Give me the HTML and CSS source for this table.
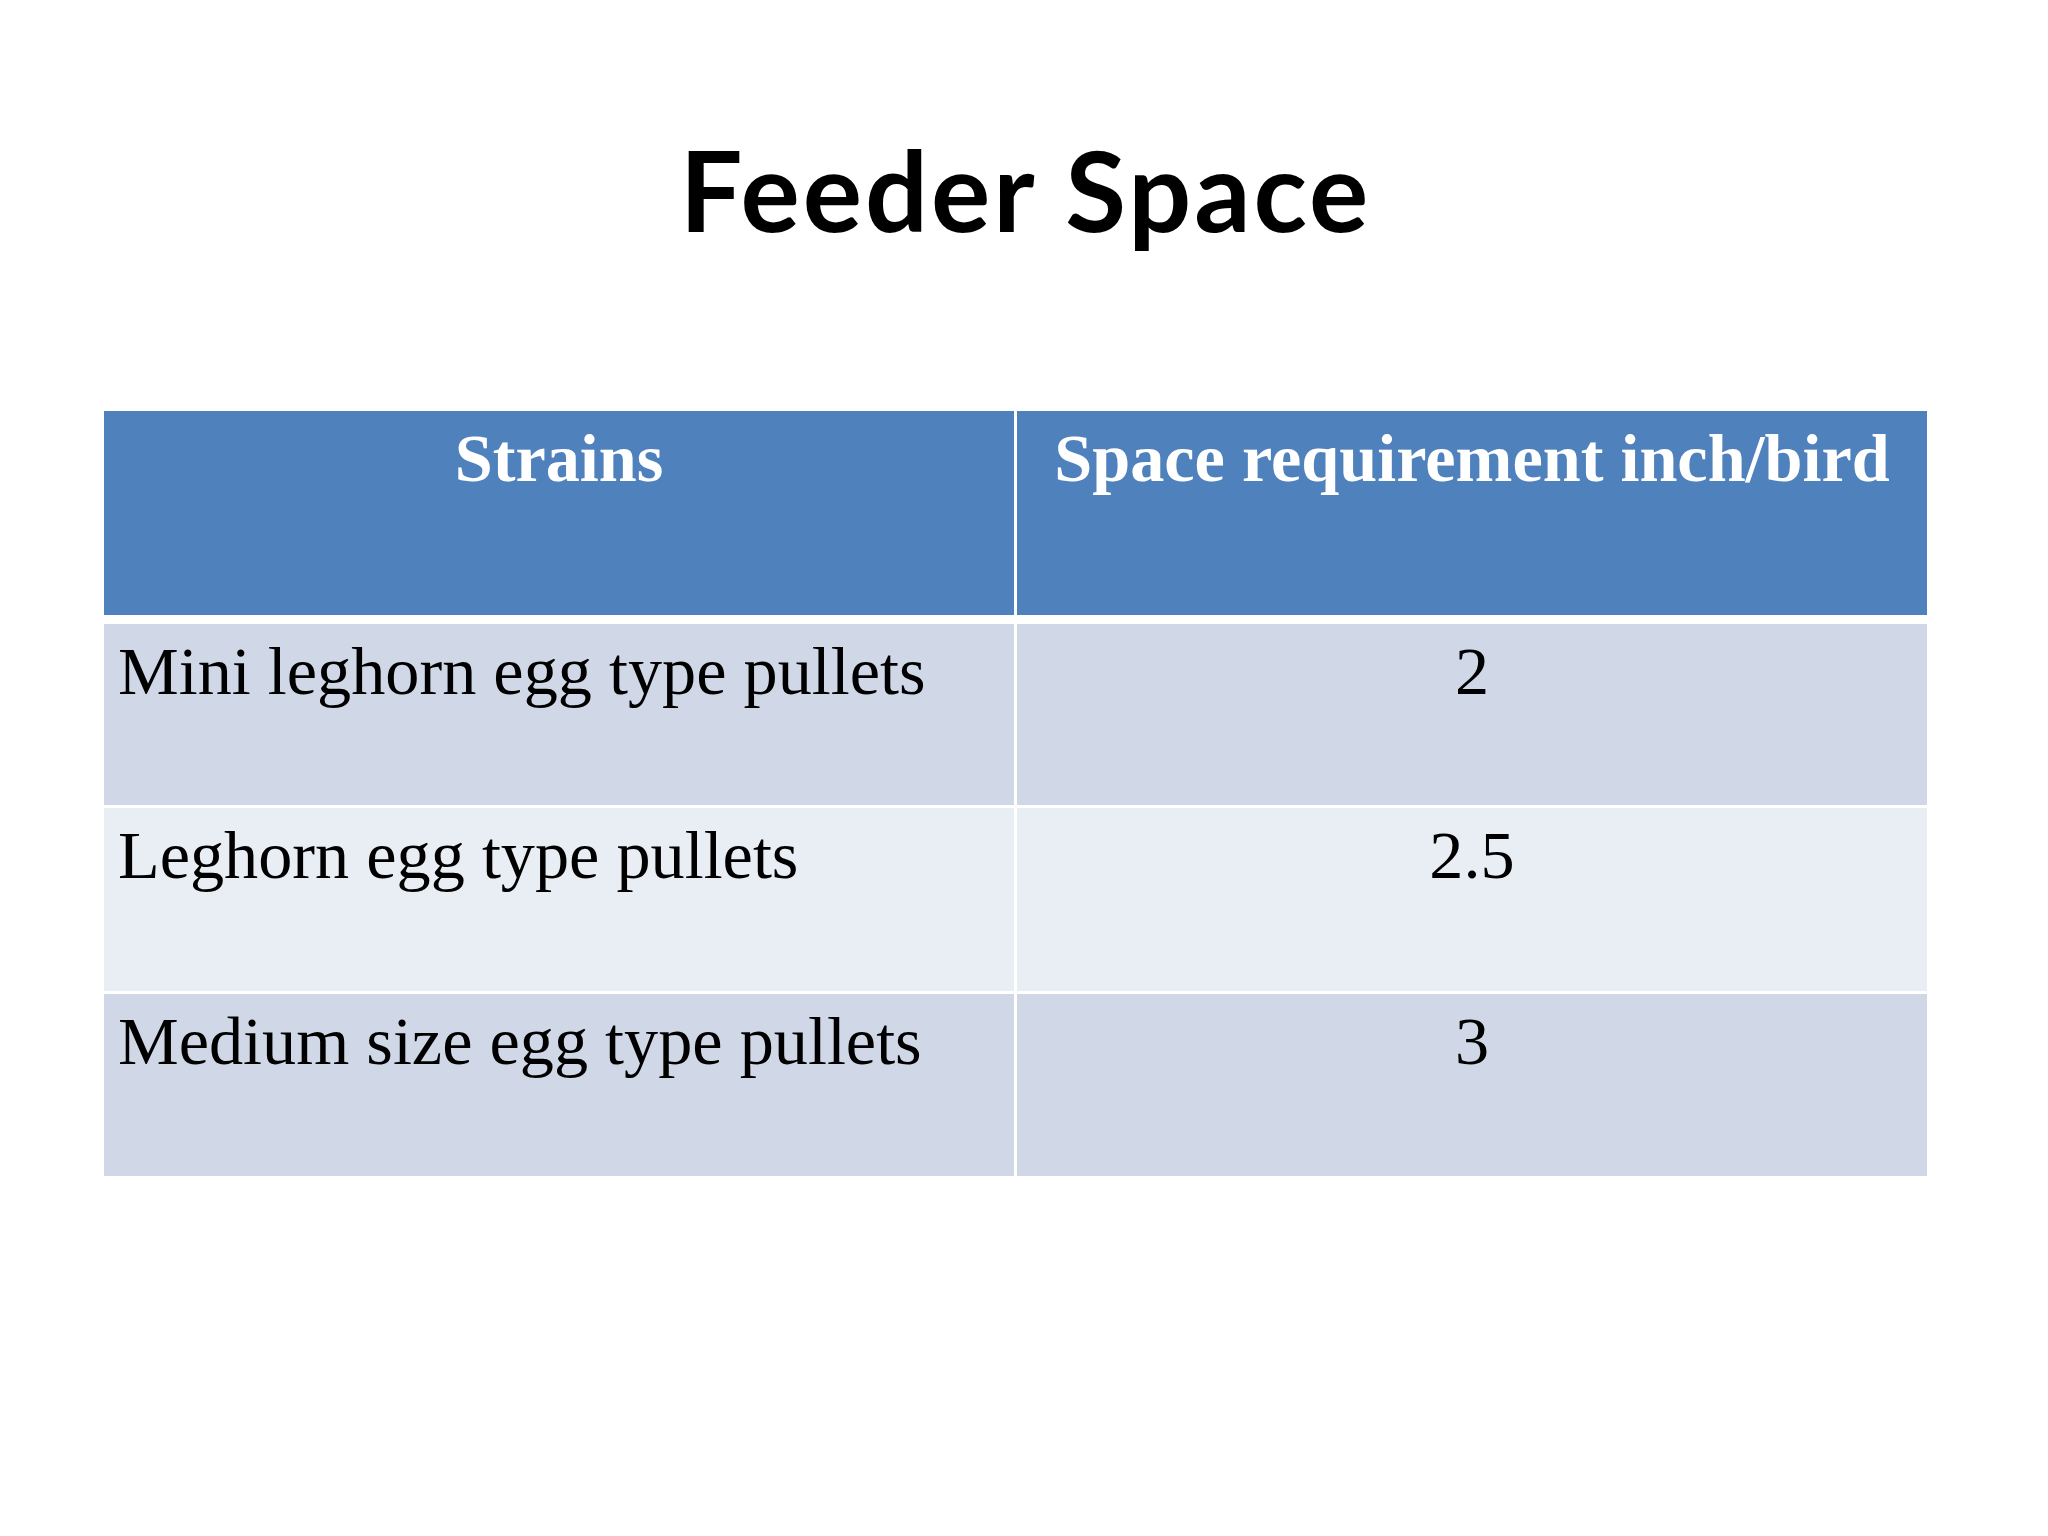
FILE: index.html
```html
<!DOCTYPE html>
<html lang="en">
<head>
<meta charset="utf-8">
<title>Feeder Space</title>
<link rel="stylesheet" href="styles.css">
</head>
<body>
<div class="slide">
  <h1 class="title">Feeder Space</h1>
  <div class="table">
    <div class="cell head left">Strains</div>
    <div class="cell head center">Space requirement inch/bird</div>
    <div class="cell band1 left">Mini leghorn egg type pullets</div>
    <div class="cell band1 center">2</div>
    <div class="cell band2 left">Leghorn egg type pullets</div>
    <div class="cell band2 center">2.5</div>
    <div class="cell band1 left">Medium size egg type pullets</div>
    <div class="cell band1 center">3</div>
  </div>
</div>
</body>
</html>
```

FILE: styles.css
```css
html, body {
  margin: 0;
  padding: 0;
  background: #ffffff;
}

.slide {
  width: 2048px;
  height: 1536px;
  overflow: hidden;
  background: #ffffff;
}

.title {
  margin: 0;
  padding-top: 134px;
  padding-left: 3px;
  font-family: Lato, "Open Sans", sans-serif;
  font-weight: 700;
  font-size: 111px;
  line-height: 110px;
  letter-spacing: 3px;
  text-align: center;
  color: #000000;
}

.table {
  margin-top: 167px;
  margin-left: 104px;
  display: grid;
  grid-template-columns: 910px 910px;
  grid-template-rows: 210px 181px 183px 182px;
  column-gap: 3px;
  row-gap: 3px;
  font-family: "Liberation Serif", "Times New Roman", serif;
  font-size: 68.27px;
  line-height: 1.15;
  color: #000000;
}

.cell {
  padding: 8px 14px 0 14px;
  box-sizing: border-box;
  white-space: nowrap;
}

.head {
  height: 204px;
  background: #4f81bd;
  color: #ffffff;
  font-weight: 700;
}

.band1 {
  background: #d0d8e8;
}

.band2 {
  background: #e9edf4;
}

.left {
  text-align: left;
}

.head.left,
.center {
  text-align: center;
}
```
